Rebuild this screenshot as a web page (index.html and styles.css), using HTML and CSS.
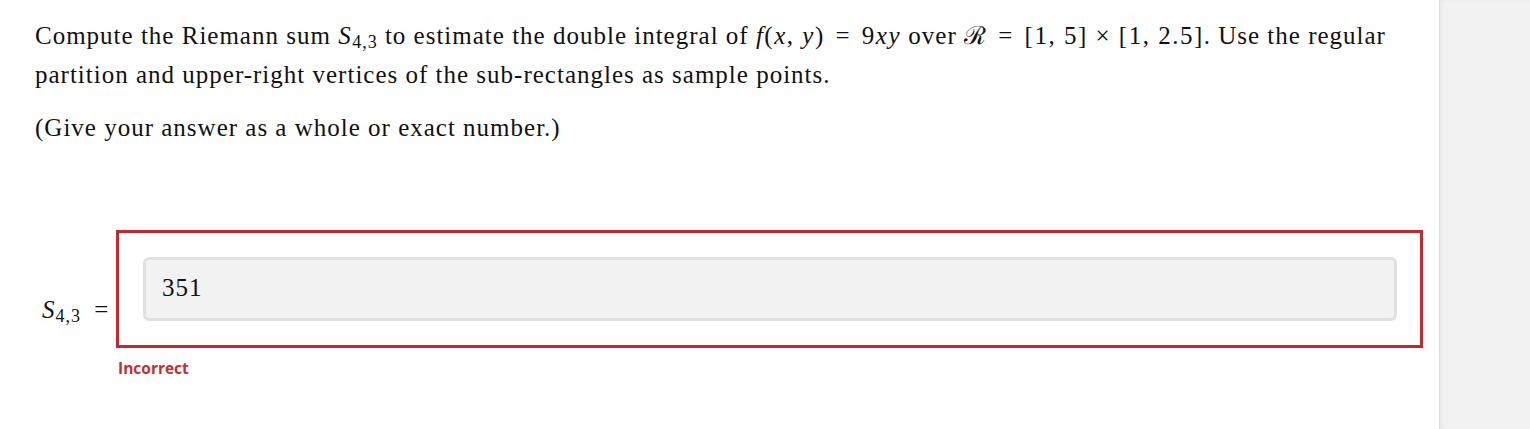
FILE: index.html
```html
<!DOCTYPE html>
<html>

<head>
  <meta charset="UTF-8">
  <title>Riemann Sum Question</title>
  <link rel="stylesheet" href="styles.css">
</head>

<body>
  <div class="page">
    <main class="question">
      <p class="prompt">
        Compute the Riemann sum <span class="math"><i>S</i><sub>4,3</sub></span> to estimate the double integral of
        <span class="math"><i>f</i>(<i>x</i>, <i>y</i>) <span class="rel">=</span> 9<i>xy</i></span> over
        <span class="math"><i class="cal">ℛ</i> <span class="rel">=</span> [1, 5] × [1, 2.5]</span>. Use the regular
        partition and upper-right vertices of the sub-rectangles as sample points.
      </p>
      <p class="prompt">(Give your answer as a whole or exact number.)</p>

      <div class="answer-row">
        <div class="answer-label"><i>S</i><sub>4,3</sub> <span class="rel">=</span></div>
        <div class="answer-col">
          <div class="answer-box incorrect">
            <input type="text" class="answer-input" value="351">
          </div>
          <div class="feedback">Incorrect</div>
        </div>
      </div>
    </main>

    <aside class="sidebar"></aside>
  </div>
</body>

</html>
```

FILE: styles.css
```css
body {
  margin: 0;
  padding: 0;
  background-color: #fff;
  font-family: "Liberation Serif", "Times New Roman", serif;
  color: #111;
}

.page {
  display: flex;
  min-height: 429px;
}

.question {
  flex: 1;
  padding: 16px 0 0 35px;
}

.prompt {
  font-size: 25px;
  letter-spacing: 1px;
  line-height: 39px;
  margin: 0 0 14px 0;
  max-width: 1375px;
}

.math {
  letter-spacing: 1.5px;
}

.math i {
  font-style: italic;
}

.math .cal {
  font-style: normal;
}

.rel {
  margin: 0 3px;
}

sub {
  font-size: 18px;
  letter-spacing: 1px;
  vertical-align: -4px;
  line-height: 0;
}

/* answer area */
.answer-row {
  display: flex;
  margin-top: 83px;
}

.answer-label {
  box-sizing: border-box;
  width: 81px;
  font-size: 25px;
  letter-spacing: 1px;
  padding: 66px 0 0 7px;
}

.answer-label .rel {
  margin: 0 4px 0 6px;
}

.answer-col {
  flex: 0 0 1307px;
}

.answer-box {
  border: 3px solid #fff;
  padding: 24px 23px 24px 24px;
}

.answer-box.incorrect {
  border-color: #c1292e;
}

.answer-input {
  display: block;
  box-sizing: border-box;
  width: 100%;
  height: 64px;
  background-color: #f2f2f2;
  border: 3px solid #e0e0e0;
  border-radius: 6px;
  padding: 0 16px 2px 16px;
  font-family: "Liberation Serif", "Times New Roman", serif;
  font-size: 25px;
  letter-spacing: 1px;
  color: #111;
}

.feedback {
  font-family: "Open Sans", Arial, sans-serif;
  font-weight: bold;
  font-size: 15.5px;
  color: #c62f2f;
  margin: 9px 0 0 2px;
}

.sidebar {
  width: 90px;
  background-color: #f2f2f2;
  border-left: 1px solid #ddd;
  box-shadow: inset 2px 0 3px rgba(0, 0, 0, 0.04);
}
```
